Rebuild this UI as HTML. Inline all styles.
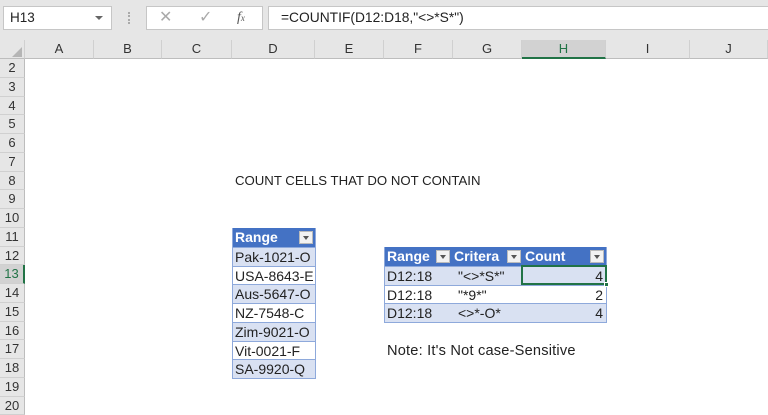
<!DOCTYPE html>
<html><head><meta charset="utf-8"><style>
*{margin:0;padding:0;box-sizing:border-box}
body{width:768px;height:406px;overflow:hidden;background:#fff;font-family:"Liberation Sans",sans-serif;position:relative;color:#222}
.a{position:absolute}
.top{left:0;top:0;width:768px;height:40px;background:#e6e6e6}
.box{background:#fff;border:1px solid #c6c6c6}
.ch{top:40px;height:19px;background:#e6e6e6;border-right:1px solid #d0d0d0;border-bottom:1px solid #bdbdbd;font-size:13px;text-align:center;line-height:18px;color:#333}
.rh{left:0;width:25px;height:18.75px;background:#e6e6e6;border-bottom:1px solid #d0d0d0;border-right:1px solid #bdbdbd;font-size:13px;text-align:center;line-height:18px;color:#333}
.c{height:18.75px;font-size:14px;line-height:18.5px;padding-left:2px;white-space:nowrap;border-top:1px solid #8ea9db;overflow:hidden}
.hd{background:#4472c4;color:#fff;font-weight:bold}
.bd{background:#d9e1f2}
.dd{position:absolute;right:2px;top:3px;width:14px;height:13px;background:#f2f2f2;border:1px solid #bbb}
.dd:after{content:"";position:absolute;left:3px;top:4px;border-left:3.5px solid transparent;border-right:3.5px solid transparent;border-top:4px solid #555}
</style></head><body>
<div class="a top"></div>
<div class="a box" style="left:3px;top:6px;width:109px;height:24px;font-size:13.5px;line-height:22px;padding-left:6px">H13<span style="position:absolute;right:8px;top:9px;border-left:4px solid transparent;border-right:4px solid transparent;border-top:4px solid #666"></span></div>
<div class="a" style="left:128px;top:12px;width:2px;height:12px;border-left:2px dotted #aaa"></div>
<div class="a box" style="left:146px;top:6px;width:117px;height:24px;color:#aaa;font-size:16px;line-height:22px">
<span class="a" style="left:12px">✕</span><span class="a" style="left:52px">✓</span><span class="a" style="left:90px;font-family:'Liberation Serif',serif;font-style:italic;color:#555;font-size:14px">f<small style="font-size:9px">x</small></span></div>
<div class="a box" style="left:268px;top:6px;width:502px;height:24px;font-size:13.8px;line-height:22px;padding-left:12px">=COUNTIF(D12:D18,"&lt;&gt;*S*")</div>

<div class="a ch" style="left:0;width:25px"></div>
<div class="a" style="left:12px;top:47px;border-left:10px solid transparent;border-bottom:10px solid #b5b5b5"></div>
<div class="a ch" style="left:25px;width:69px">A</div>
<div class="a ch" style="left:94px;width:68px">B</div>
<div class="a ch" style="left:162px;width:70px">C</div>
<div class="a ch" style="left:232px;width:83px">D</div>
<div class="a ch" style="left:315px;width:69px">E</div>
<div class="a ch" style="left:384px;width:69px">F</div>
<div class="a ch" style="left:453px;width:69px">G</div>
<div class="a ch" style="left:522px;width:84px;background:#d2d2d2;border-bottom:2px solid #217346;color:#217346">H</div>
<div class="a ch" style="left:606px;width:84px">I</div>
<div class="a ch" style="left:690px;width:78px">J</div>

<div class="a rh" style="top:59px">2</div>
<div class="a rh" style="top:77.75px">3</div>
<div class="a rh" style="top:96.5px">4</div>
<div class="a rh" style="top:115.25px">5</div>
<div class="a rh" style="top:134px">6</div>
<div class="a rh" style="top:152.75px">7</div>
<div class="a rh" style="top:171.5px">8</div>
<div class="a rh" style="top:190.25px">9</div>
<div class="a rh" style="top:209px">10</div>
<div class="a rh" style="top:227.75px">11</div>
<div class="a rh" style="top:246.5px">12</div>
<div class="a rh" style="top:265.25px;background:#d2d2d2;color:#217346;border-right:2px solid #217346">13</div>
<div class="a rh" style="top:284px">14</div>
<div class="a rh" style="top:302.75px">15</div>
<div class="a rh" style="top:321.5px">16</div>
<div class="a rh" style="top:340.25px">17</div>
<div class="a rh" style="top:359px">18</div>
<div class="a rh" style="top:377.75px">19</div>
<div class="a rh" style="top:396.5px">20</div>

<div class="a" style="left:235px;top:173px;font-size:13.2px;line-height:16px">COUNT CELLS THAT DO NOT CONTAIN</div>

<div class="a" style="left:232px;top:228px;width:84px;border:1px solid #8ea9db;border-top:none">
<div class="c hd" style="position:relative;border-top:none">Range<span class="dd"></span></div>
<div class="c bd">Pak-1021-O</div>
<div class="c">USA-8643-E</div>
<div class="c bd">Aus-5647-O</div>
<div class="c">NZ-7548-C</div>
<div class="c bd">Zim-9021-O</div>
<div class="c">Vit-0021-F</div>
<div class="c bd">SA-9920-Q</div>
</div>

<div class="a" style="left:384px;top:247px;width:223px;border:1px solid #8ea9db;border-top:none">
<div style="display:flex">
<div class="c hd" style="position:relative;width:67px;border-top:none">Range<span class="dd"></span></div>
<div class="c hd" style="position:relative;width:71px;border-top:none">Critera<span class="dd"></span></div>
<div class="c hd" style="position:relative;width:83px;border-top:none">Count<span class="dd"></span></div>
</div>
<div style="display:flex"><div class="c bd" style="width:67px">D12:18</div><div class="c bd" style="width:71px;padding-left:6px">"&lt;&gt;*S*"</div><div class="c bd" style="width:83px;text-align:right;padding-right:3px">4</div></div>
<div style="display:flex"><div class="c" style="width:67px">D12:18</div><div class="c" style="width:71px;padding-left:6px">"*9*"</div><div class="c" style="width:83px;text-align:right;padding-right:3px">2</div></div>
<div style="display:flex"><div class="c bd" style="width:67px">D12:18</div><div class="c bd" style="width:71px;padding-left:6px">&lt;&gt;*-O*</div><div class="c bd" style="width:83px;text-align:right;padding-right:3px">4</div></div>
</div>
<div class="a" style="left:521px;top:265px;width:86px;height:20px;border:2px solid #217346"></div>
<div class="a" style="left:604px;top:282px;width:5px;height:5px;background:#217346;border:1px solid #fff"></div>

<div class="a" style="left:387px;top:343px;font-size:14.6px;line-height:16px;letter-spacing:0.2px">Note: It's Not case-Sensitive</div>
</body></html>
